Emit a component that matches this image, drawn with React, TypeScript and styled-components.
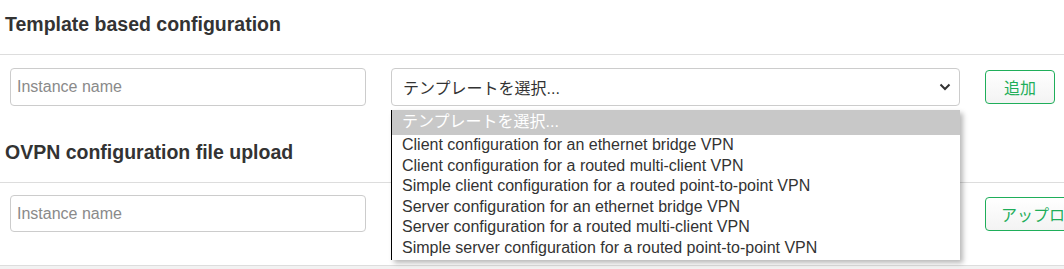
import React from 'react';
import styled, { createGlobalStyle } from 'styled-components';

const GlobalStyle = createGlobalStyle`
  body {
    margin: 0;
    background: #fff;
    font-family: "Liberation Sans", Arial, "Noto Sans CJK JP", sans-serif;
    color: #333;
  }
`;

const Page = styled.div`
  width: 1064px;
  height: 269px;
  overflow: hidden;
  background: #f2f2f2;
`;

const Section = styled.section`
  background: #fff;
`;

const Heading = styled.h3`
  margin: 0;
  padding: 12px 5px 18px;
  font-size: 19.5px;
  line-height: 24px;
  font-weight: bold;
  color: #333;
  border-bottom: 1px solid #ddd;
`;

const Row = styled.div<{ $bottom: number; $top: number }>`
  display: flex;
  align-items: center;
  padding: ${p => p.$top}px 0 ${p => p.$bottom}px 10px;
  border-bottom: ${p => (p.$bottom > 30 ? '1px solid #ddd' : 'none')};
  & > * {
    flex-shrink: 0;
  }
`;

const TextInput = styled.input<{ $h: number }>`
  box-sizing: border-box;
  width: 356px;
  height: ${p => p.$h}px;
  padding: 0 6px;
  border: 1px solid #ccc;
  border-radius: 4px;
  font-family: "Liberation Sans", Arial, sans-serif;
  font-size: 16px;
  color: #333;
  &::placeholder {
    color: #8a8a8a;
  }
`;

const SelectWrap = styled.div`
  position: relative;
  margin-left: 25px;
  width: 569px;
`;

const SelectBox = styled.div`
  box-sizing: border-box;
  height: 38px;
  display: flex;
  align-items: center;
  justify-content: space-between;
  padding: 0 8px 0 11px;
  border: 1px solid #ccc;
  border-radius: 4px;
  font-size: 16px;
  color: #333;
  background: #fff;
`;

const FileSlot = styled.div`
  margin-left: 25px;
  width: 569px;
  height: 37px;
`;

const Listbox = styled.ul`
  position: absolute;
  top: 42px;
  left: 0;
  width: 569px;
  margin: 0;
  padding: 0 0 2px;
  list-style: none;
  background: #fff;
  border-left: 1px solid #000;
  box-sizing: border-box;
  box-shadow: 3px 3px 5px rgba(0, 0, 0, 0.28);
  z-index: 5;
`;

const Option = styled.li<{ $active?: boolean }>`
  padding-left: 10px;
  height: ${p => (p.$active ? '25px' : '20.5px')};
  line-height: ${p => (p.$active ? '24px' : '20.5px')};
  font-size: 16px;
  white-space: nowrap;
  color: ${p => (p.$active ? '#fff' : '#333')};
  background: ${p => (p.$active ? '#c8c8c8' : 'transparent')};
`;

const ActionButton = styled.button`
  box-sizing: border-box;
  margin-left: 25px;
  min-width: 70px;
  height: 34px;
  padding: 0 15px;
  border: 1px solid #1fae5a;
  border-radius: 4px;
  background: linear-gradient(#fff, #f3f3f3);
  color: #1fae5a;
  font-family: "Liberation Sans", Arial, "Noto Sans CJK JP", sans-serif;
  font-size: 16px;
  white-space: nowrap;
`;

const Chevron = () => (
  <svg width="12" height="8" viewBox="0 0 12 8">
    <path d="M1.5 1.5 L6 6 L10.5 1.5" fill="none" stroke="#333" strokeWidth="2" />
  </svg>
);

const templates = [
  'Client configuration for an ethernet bridge VPN',
  'Client configuration for a routed multi-client VPN',
  'Simple client configuration for a routed point-to-point VPN',
  'Server configuration for an ethernet bridge VPN',
  'Server configuration for a routed multi-client VPN',
  'Simple server configuration for a routed point-to-point VPN',
];

export default function App() {
  return (
    <Page>
      <GlobalStyle />
      <Section>
        <Heading>Template based configuration</Heading>
        <Row $top={13} $bottom={22}>
          <TextInput $h={38} placeholder="Instance name" />
          <SelectWrap>
            <SelectBox>
              <span>テンプレートを選択...</span>
              <Chevron />
            </SelectBox>
            <Listbox>
              <Option $active>テンプレートを選択...</Option>
              {templates.map(t => (
                <Option key={t}>{t}</Option>
              ))}
            </Listbox>
          </SelectWrap>
          <ActionButton>追加</ActionButton>
        </Row>
      </Section>
      <Section>
        <Heading>OVPN configuration file upload</Heading>
        <Row $top={12} $bottom={33}>
          <TextInput $h={37} placeholder="Instance name" />
          <FileSlot />
          <ActionButton>アップロード</ActionButton>
        </Row>
      </Section>
    </Page>
  );
}
